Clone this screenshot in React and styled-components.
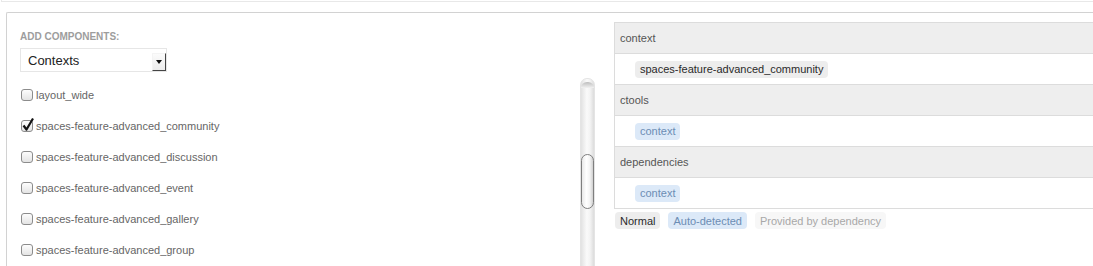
import React from "react";
import styled, { createGlobalStyle } from "styled-components";

const Global = createGlobalStyle`
  html, body { margin: 0; padding: 0; background: #fff; overflow: hidden; }
  body { font-family: "Liberation Sans", Arial, Helvetica, sans-serif; }
`;

const Page = styled.div`
  width: 1093px;
  height: 266px;
  overflow: hidden;
`;

const TopStrip = styled.div`
  height: 1px;
  border-bottom: 1px solid #e8e8e8;
  border-left: 1px solid #e8e8e8;
  margin-left: 1px;
`;

const Panel = styled.div`
  margin-top: 10px;
  margin-left: 6px;
  width: 1120px;
  height: 300px;
  border-top: 1px solid #d2d2d2;
  border-left: 1px solid #d2d2d2;
  border-top-left-radius: 2px;
  padding: 9px 0 0 13px;
  box-sizing: border-box;
  display: flex;
  gap: 19px;
`;

const LeftCol = styled.div`
  width: 575px;
  display: flex;
  flex-direction: column;
  padding-top: 9px;
`;

const Label = styled.div`
  font-size: 10px;
  line-height: 12px;
  font-weight: bold;
  color: #9d9d9d;
  text-transform: uppercase;
`;

const Select = styled.div`
  margin-top: 5px;
  width: 147px;
  height: 24px;
  box-sizing: border-box;
  border: 1px solid #e6e6e6;
  display: flex;
  align-items: center;
  justify-content: space-between;
  padding-left: 7px;
  padding-right: 0;
  font-size: 13px;
  color: #222;
`;

const ArrowButton = styled.div`
  width: 14px;
  height: 18px;
  margin-top: 4px;
  box-sizing: border-box;
  background: linear-gradient(#fbfbfb, #ececec);
  border-top: 1px solid #f4f4f4;
  border-left: 1px solid #f4f4f4;
  border-right: 1px solid #444;
  border-bottom: 1px solid #444;
  display: flex;
  align-items: center;
  justify-content: center;
`;

const Triangle = styled.div`
  width: 0;
  height: 0;
  border-left: 3px solid transparent;
  border-right: 3px solid transparent;
  border-top: 4px solid #111;
`;

const ListArea = styled.div`
  margin-top: 6px;
  display: flex;
  height: 200px;
`;

const List = styled.div`
  flex: 1;
  padding-top: 1px;
  display: flex;
  flex-direction: column;
`;

const Row = styled.label`
  height: 31px;
  display: flex;
  align-items: center;
  padding-left: 1px;
  font-size: 11px;
  color: #666;
`;

const Box = styled.span`
  position: relative;
  width: 12px;
  height: 12px;
  box-sizing: border-box;
  border: 1px solid #8c8c8c;
  border-radius: 3px;
  background: linear-gradient(#fdfdfd, #e4e4e4);
  margin-right: 3px;
  flex: none;
`;

const Check = styled.svg`
  position: absolute;
  left: 0px;
  top: -3px;
  overflow: visible;
`;

const Track = styled.div`
  width: 15px;
  height: 200px;
  box-sizing: border-box;
  border-top-left-radius: 7px;
  border-top-right-radius: 7px;
  background: linear-gradient(90deg, #e2e2e2, #fafafa 45%, #f3f3f3 70%, #dcdcdc);
  border: 1px solid #e4e4e4;
  display: flex;
  flex-direction: column;
  align-items: center;
`;

const TrackCap = styled.div`
  width: 13px;
  height: 6px;
  border-radius: 6px 6px 0 0;
  background: linear-gradient(#bdbdbd, #f2f2f2);
  margin-top: 3px;
`;

const Thumb = styled.div`
  margin-top: 66px;
  width: 13px;
  height: 55px;
  box-sizing: border-box;
  border: 1px solid #7e7e7e;
  border-radius: 7px;
  background: linear-gradient(90deg, #e8e8e8, #ffffff 40%, #f4f4f4 70%, #cfcfcf);
`;

const RightCol = styled.div`
  width: 490px;
  display: flex;
  flex-direction: column;
`;

const Table = styled.div`
  border: 1px solid #dcdcdc;
  display: flex;
  flex-direction: column;
`;

const Header = styled.div`
  height: 30px;
  background: #eeeeee;
  display: flex;
  align-items: center;
  padding-left: 5px;
  font-size: 11px;
  color: #555;
  border-top: ${(p) => (p.$first ? "none" : "1px solid #dcdcdc")};
`;

const ValueRow = styled.div`
  height: 30px;
  background: #fff;
  display: flex;
  align-items: center;
  padding-left: 20px;
  border-top: 1px solid #dcdcdc;
`;

const pillColors = {
  normal: { bg: "#ededed", fg: "#2a2a2a" },
  auto: { bg: "#dce9f8", fg: "#6c8db4" },
  dep: { bg: "#f7f7f7", fg: "#a8a8a8" },
};

const Pill = styled.span`
  display: inline-flex;
  align-items: center;
  height: 17px;
  padding: 0 5px;
  border-radius: 4px;
  font-size: 11px;
  background: ${(p) => pillColors[p.$kind].bg};
  color: ${(p) => pillColors[p.$kind].fg};
`;

const Legend = styled.div`
  margin-top: 3px;
  padding-left: 1px;
  display: flex;
  gap: 8px;
`;

const items = [
  { name: "layout_wide", checked: false },
  { name: "spaces-feature-advanced_community", checked: true },
  { name: "spaces-feature-advanced_discussion", checked: false },
  { name: "spaces-feature-advanced_event", checked: false },
  { name: "spaces-feature-advanced_gallery", checked: false },
  { name: "spaces-feature-advanced_group", checked: false },
];

const sections = [
  { title: "context", value: "spaces-feature-advanced_community", kind: "normal" },
  { title: "ctools", value: "context", kind: "auto" },
  { title: "dependencies", value: "context", kind: "auto" },
];

export default function App() {
  return (
    <Page>
      <Global />
      <TopStrip />
      <Panel>
        <LeftCol>
          <Label>Add components:</Label>
          <Select>
            <span>Contexts</span>
            <ArrowButton>
              <Triangle />
            </ArrowButton>
          </Select>
          <ListArea>
            <List>
              {items.map((it) => (
                <Row key={it.name}>
                  <Box>
                    {it.checked && (
                      <Check width="12" height="14" viewBox="0 0 12 14">
                        <path
                          d="M1.5 7.5 L4.5 11.5 L11 0.5"
                          fill="none"
                          stroke="#111"
                          strokeWidth="2.2"
                          strokeLinejoin="round"
                        />
                      </Check>
                    )}
                  </Box>
                  {it.name}
                </Row>
              ))}
            </List>
            <Track>
              <TrackCap />
              <Thumb />
            </Track>
          </ListArea>
        </LeftCol>
        <RightCol>
          <Table>
            {sections.map((s, i) => (
              <React.Fragment key={s.title}>
                <Header $first={i === 0}>{s.title}</Header>
                <ValueRow>
                  <Pill $kind={s.kind}>{s.value}</Pill>
                </ValueRow>
              </React.Fragment>
            ))}
          </Table>
          <Legend>
            <Pill $kind="normal">Normal</Pill>
            <Pill $kind="auto">Auto-detected</Pill>
            <Pill $kind="dep">Provided by dependency</Pill>
          </Legend>
        </RightCol>
      </Panel>
    </Page>
  );
}
